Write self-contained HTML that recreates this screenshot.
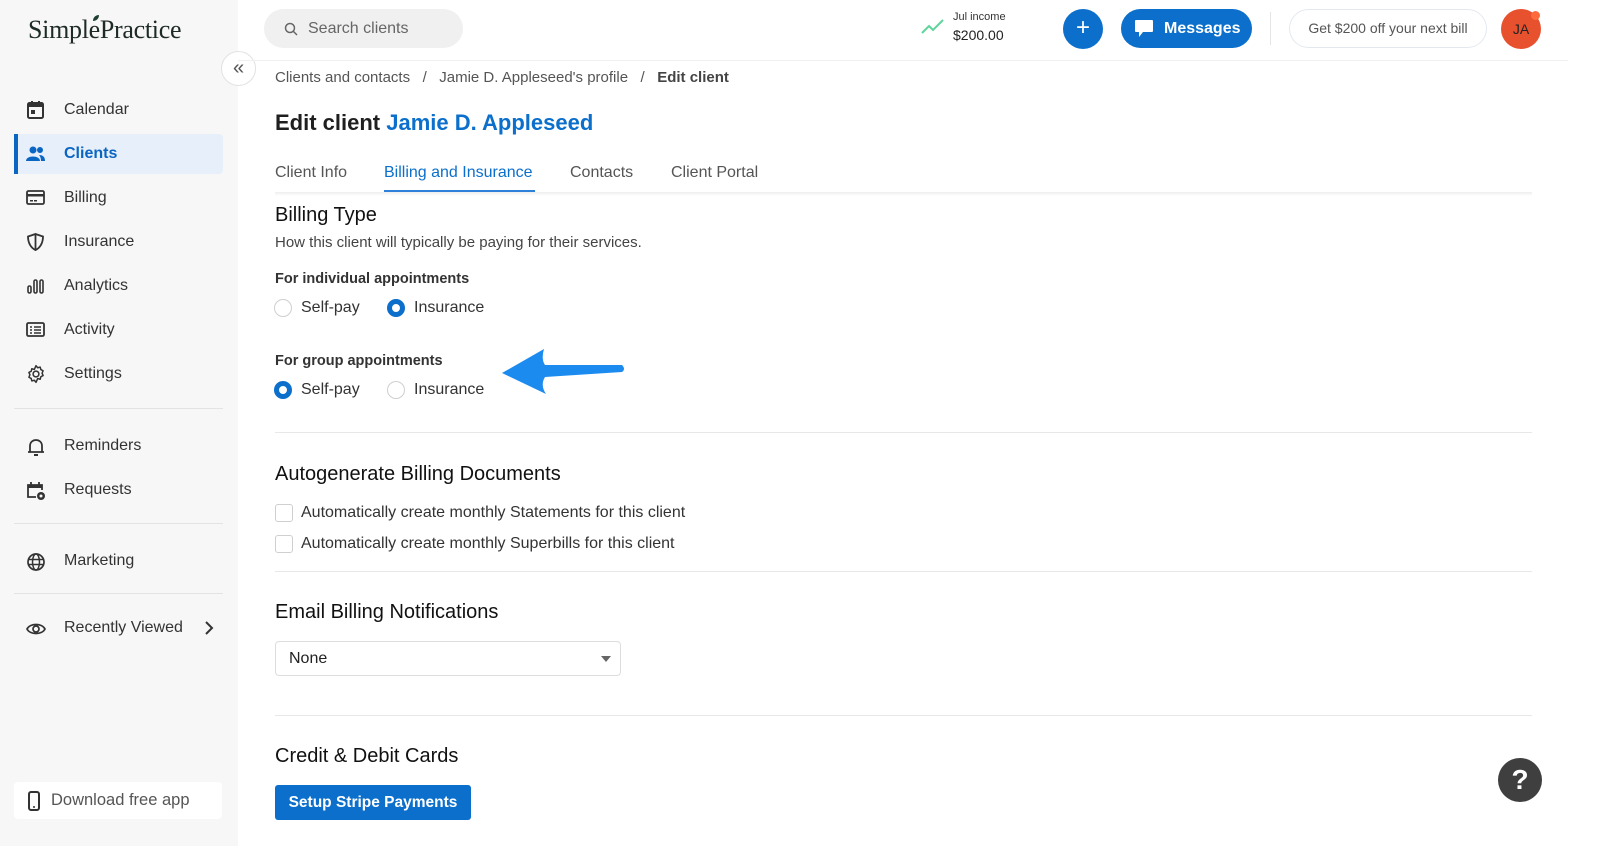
<!DOCTYPE html>
<html><head><meta charset="utf-8"><style>
*{margin:0;padding:0;box-sizing:border-box}
body{width:1600px;height:846px;position:relative;overflow:hidden;background:#fff;font-family:"Liberation Sans",Arial,sans-serif;color:#222}
.a{position:absolute;white-space:nowrap}
#side{position:absolute;left:0;top:0;width:238px;height:846px;background:#f7f7f7}
.nav{position:absolute;left:14px;width:209px;height:40px;font-size:16px;color:#333;line-height:40px;padding-left:50px}
.nav svg{position:absolute;left:12px;top:11px}
.hr{position:absolute;left:14px;width:209px;height:1px;background:#e3e3e3}
.radio{position:absolute;width:18px;height:18px;border-radius:50%;border:1px solid #cfcfcf;background:#fff}
.radio.on{border:5px solid #0b6fcb}
.cb{position:absolute;width:18px;height:18px;border-radius:3px;border:1px solid #cfcfcf}
.t15{font-size:16px;color:#333}
.h{font-size:20px;color:#111}
.line{position:absolute;left:275px;width:1257px;height:1px;background:#e8e8e8}
</style></head><body>
<div id="side">
<div class="a" style="left:28px;top:15px;font-size:26px;font-family:'Liberation Serif',serif;color:#1d2a26;letter-spacing:-0.3px">SimplePractice</div>
<svg class="a" style="left:91px;top:13px" width="10" height="10" viewBox="0 0 10 10"><path d="M2 8 C2 4 5 2 8 2 C8 6 5 8 2 8Z" fill="#1d4030"/></svg>

<div class="nav" style="top:90px"><svg width="20" height="18" viewBox="0 0 20 18"><rect x="2" y="2" width="15" height="15" rx="1.5" fill="none" stroke="#333" stroke-width="2"/><rect x="2" y="2" width="15" height="4" fill="#333"/><rect x="5" y="0" width="2" height="4" fill="#333"/><rect x="12" y="0" width="2" height="4" fill="#333"/><rect x="5" y="9" width="4" height="4" fill="#333"/></svg>Calendar</div>
<div class="nav" style="top:134px;background:#e7f0fa;color:#0b65c2;font-weight:bold;border-left:4px solid #0b65c2;padding-left:46px;border-radius:0 4px 4px 0"><svg style="left:8px" width="20" height="18" viewBox="0 0 20 18"><circle cx="7" cy="5" r="3.5" fill="#0b65c2"/><circle cx="14" cy="5" r="3" fill="#0b65c2"/><path d="M0 16 C0 10 14 10 14 16Z" fill="#0b65c2"/><path d="M13 10 C17 10 19 12 19 16 L15 16 C15 13 14 11 13 10Z" fill="#0b65c2"/></svg>Clients</div>
<div class="nav" style="top:178px"><svg width="20" height="18" viewBox="0 0 20 18"><rect x="1" y="2" width="17" height="13" rx="1.5" fill="none" stroke="#333" stroke-width="1.8"/><rect x="1" y="5" width="17" height="2.5" fill="#333"/><rect x="4" y="11" width="3" height="1.5" fill="#333"/><rect x="8" y="11" width="3" height="1.5" fill="#333"/></svg>Billing</div>
<div class="nav" style="top:222px"><svg width="20" height="18" viewBox="0 0 20 18"><path d="M9.5 1 L17 3.5 C17 10 14 15 9.5 17 C5 15 2 10 2 3.5Z" fill="none" stroke="#333" stroke-width="1.8"/><path d="M9.5 1 V17" stroke="#333" stroke-width="1.8"/></svg>Insurance</div>
<div class="nav" style="top:266px"><svg width="20" height="18" viewBox="0 0 20 18"><rect x="2" y="9" width="3" height="7" rx="1.5" fill="none" stroke="#333" stroke-width="1.6"/><rect x="8" y="3" width="3" height="13" rx="1.5" fill="none" stroke="#333" stroke-width="1.6"/><rect x="14" y="3" width="3" height="13" rx="1.5" fill="none" stroke="#333" stroke-width="1.6"/></svg>Analytics</div>
<div class="nav" style="top:310px"><svg width="20" height="18" viewBox="0 0 20 18"><rect x="1" y="2" width="17" height="13" rx="1.5" fill="none" stroke="#333" stroke-width="1.8"/><path d="M4 6h2M8 6h7M4 9h2M8 9h7M4 12h2M8 12h7" stroke="#333" stroke-width="1.5"/></svg>Activity</div>
<div class="nav" style="top:354px"><svg width="20" height="20" viewBox="0 0 24 24" style="top:10px"><path d="M12 2l2 2.5 3-.8.8 3 2.7 1.4-1.2 2.9 1.2 2.9-2.7 1.4-.8 3-3-.8L12 22l-2-2.5-3 .8-.8-3-2.7-1.4 1.2-2.9-1.2-2.9 2.7-1.4.8-3 3 .8z" fill="none" stroke="#333" stroke-width="1.8" stroke-linejoin="round"/><circle cx="12" cy="12" r="3.5" fill="none" stroke="#333" stroke-width="1.8"/></svg>Settings</div>
<div class="hr" style="top:408px"></div>
<div class="nav" style="top:426px"><svg width="20" height="20" viewBox="0 0 20 20"><path d="M4 15 V9 C4 5 7 3 10 3 C13 3 16 5 16 9 V15 H4Z M2 15 H18" fill="none" stroke="#333" stroke-width="1.8" stroke-linejoin="round"/><path d="M8 18 H12" stroke="#333" stroke-width="2"/></svg>Reminders</div>
<div class="nav" style="top:470px"><svg width="20" height="20" viewBox="0 0 20 20"><path d="M10 16 H2 V4 H16 V9" fill="none" stroke="#333" stroke-width="1.8"/><rect x="2" y="4" width="14" height="3" fill="#333"/><path d="M5 1v4M13 1v4" stroke="#333" stroke-width="1.8"/><circle cx="15" cy="15" r="4" fill="#333"/><circle cx="15" cy="15" r="1.5" fill="#f7f7f7"/></svg>Requests</div>
<div class="hr" style="top:523px"></div>
<div class="nav" style="top:541px"><svg width="20" height="20" viewBox="0 0 20 20"><circle cx="10" cy="10" r="8" fill="none" stroke="#333" stroke-width="1.7"/><ellipse cx="10" cy="10" rx="3.5" ry="8" fill="none" stroke="#333" stroke-width="1.5"/><path d="M2 7.5h16M2 12.5h16" stroke="#333" stroke-width="1.5"/></svg>Marketing</div>
<div class="hr" style="top:593px"></div>
<div class="nav" style="top:608px"><svg width="20" height="20" viewBox="0 0 20 20"><path d="M1 10 C4 4 16 4 19 10 C16 16 4 16 1 10Z" fill="none" stroke="#333" stroke-width="1.7"/><circle cx="10" cy="10" r="3" fill="none" stroke="#333" stroke-width="1.7"/></svg>Recently Viewed<svg style="left:190px;top:13px" width="10" height="14" viewBox="0 0 10 14"><path d="M2 1 L8 7 L2 13" fill="none" stroke="#333" stroke-width="2"/></svg></div>
<div class="a" style="left:14px;top:782px;width:208px;height:37px;background:#fff;border-radius:4px;font-size:16.5px;color:#555;line-height:37px;padding-left:37px"><svg class="a" style="left:14px;top:9px" width="12" height="20" viewBox="0 0 12 20"><rect x="1" y="1" width="10" height="18" rx="2" fill="none" stroke="#333" stroke-width="2"/><circle cx="6" cy="16" r="1" fill="#333"/></svg>Download free app</div>
</div>
<div class="a" style="left:221px;top:51px;width:35px;height:35px;border-radius:50%;background:#fff;border:1px solid #e2e2e2;text-align:center;line-height:32px;font-size:20px;color:#555">«</div>
<div class="a" style="left:238px;top:60px;width:1330px;height:1px;background:#f0f0f0"></div>

<div class="a" style="left:264px;top:9px;width:199px;height:39px;border-radius:20px;background:#f0f0f0;font-size:16px;color:#666;line-height:39px;padding-left:44px"><svg class="a" style="left:20px;top:13px" width="14" height="14" viewBox="0 0 14 14"><circle cx="6" cy="6" r="4.5" fill="none" stroke="#666" stroke-width="1.5"/><path d="M9.5 9.5L13 13" stroke="#666" stroke-width="1.5"/></svg>Search clients</div>
<svg class="a" style="left:921px;top:18px" width="24" height="18" viewBox="0 0 24 18"><path d="M1 15 L8 8 L12 12 L22 2" fill="none" stroke="#5fd49a" stroke-width="2"/></svg>
<div class="a" style="left:953px;top:11px;font-size:11px;color:#333">Jul income</div>
<div class="a" style="left:953px;top:27px;font-size:14px;color:#222">$200.00</div>
<div class="a" style="left:1063px;top:9px;width:40px;height:40px;border-radius:50%;background:#0b6fcb;color:#fff;text-align:center;line-height:38px;font-size:24px">+</div>
<div class="a" style="left:1121px;top:9px;width:131px;height:39px;border-radius:20px;background:#0b6fcb;color:#fff;font-weight:bold;font-size:16px;line-height:39px;padding-left:43px"><svg class="a" style="left:13px;top:10px" width="20" height="20" viewBox="0 0 20 20"><path d="M2 1 H18 Q19 1 19 2 V12 Q19 13 18 13 H9 L5 18 V13 H2 Q1 13 1 12 V2 Q1 1 2 1Z" fill="#fff"/></svg>Messages</div>
<div class="a" style="left:1270px;top:12px;width:1px;height:33px;background:#e5e5e5"></div>
<div class="a" style="left:1289px;top:9px;width:198px;height:39px;border-radius:20px;border:1px solid #e4e9f0;font-size:14px;color:#555;line-height:37px;text-align:center">Get $200 off your next bill</div>
<div class="a" style="left:1501px;top:9px;width:40px;height:40px;border-radius:50%;background:#e8512e;color:#222;text-align:center;line-height:40px;font-size:14px">JA</div>
<div class="a" style="left:1531px;top:11px;width:9px;height:9px;border-radius:50%;background:#ff6a3d"></div>

<div class="a" style="left:275px;top:69px;font-size:15px;color:#555">Clients and contacts &nbsp;&nbsp;/ &nbsp;&nbsp;Jamie D. Appleseed's profile &nbsp;&nbsp;/ &nbsp;&nbsp;<span style="color:#444;font-weight:bold">Edit client</span></div>
<div class="a" style="left:275px;top:110px;font-size:22px;font-weight:bold;color:#1f1f1f">Edit client <span style="color:#0b6fcb">Jamie D. Appleseed</span></div>
<div class="a" style="left:275px;top:164px;font-size:16px;color:#555">Client Info</div>
<div class="a" style="left:384px;top:164px;font-size:16px;color:#0b6fcb">Billing and Insurance</div>
<div class="a" style="left:384px;top:190px;width:151px;height:2px;background:#2f80d8"></div>
<div class="a" style="left:570px;top:164px;font-size:16px;color:#555">Contacts</div>
<div class="a" style="left:671px;top:164px;font-size:16px;color:#555">Client Portal</div>
<div class="a" style="left:275px;top:192px;width:1257px;height:4px;background:linear-gradient(#eee,#fff)"></div>

<div class="a h" style="left:275px;top:204px">Billing Type</div>
<div class="a" style="left:275px;top:234px;font-size:15px;color:#444">How this client will typically be paying for their services.</div>
<div class="a" style="left:275px;top:271px;font-size:14.5px;color:#333;font-weight:bold">For individual appointments</div>
<div class="radio" style="left:274px;top:299px"></div><div class="a t15" style="left:301px;top:299px">Self-pay</div>
<div class="radio on" style="left:387px;top:299px"></div><div class="a t15" style="left:414px;top:299px">Insurance</div>
<div class="a" style="left:275px;top:353px;font-size:14.5px;color:#333;font-weight:bold">For group appointments</div>
<div class="radio on" style="left:274px;top:381px"></div><div class="a t15" style="left:301px;top:381px">Self-pay</div>
<div class="radio" style="left:387px;top:381px"></div><div class="a t15" style="left:414px;top:381px">Insurance</div>
<svg class="a" style="left:498px;top:345px" width="130" height="52" viewBox="0 0 130 52"><path d="M4 28 L46 4 Q43 14 47 20 L124 20 Q128 24 124 27 L47 32 Q42 40 48 49Z" fill="#1c8bf0"/></svg>
<div class="line" style="top:432px"></div>

<div class="a h" style="left:275px;top:463px">Autogenerate Billing Documents</div>
<div class="cb" style="left:275px;top:504px"></div><div class="a t15" style="left:301px;top:504px">Automatically create monthly Statements for this client</div>
<div class="cb" style="left:275px;top:535px"></div><div class="a t15" style="left:301px;top:535px">Automatically create monthly Superbills for this client</div>
<div class="line" style="top:571px"></div>
<div class="a h" style="left:275px;top:601px">Email Billing Notifications</div>
<div class="a" style="left:275px;top:641px;width:346px;height:35px;border:1px solid #ddd;border-radius:4px;font-size:16px;color:#222;line-height:33px;padding-left:13px">None<svg class="a" style="left:325px;top:14px" width="10" height="6" viewBox="0 0 10 6"><path d="M0 0H10L5 6Z" fill="#666"/></svg></div>
<div class="line" style="top:715px"></div>
<div class="a h" style="left:275px;top:745px">Credit &amp; Debit Cards</div>
<div class="a" style="left:275px;top:785px;width:196px;height:35px;background:#0b6fcb;border-radius:3px;color:#fff;font-weight:bold;font-size:15.5px;line-height:35px;text-align:center">Setup Stripe Payments</div>
<div class="a" style="left:1498px;top:758px;width:44px;height:44px;border-radius:50%;background:#3f3f3f;color:#fff;text-align:center;line-height:44px;font-size:28px;font-weight:bold">?</div>
</body></html>
